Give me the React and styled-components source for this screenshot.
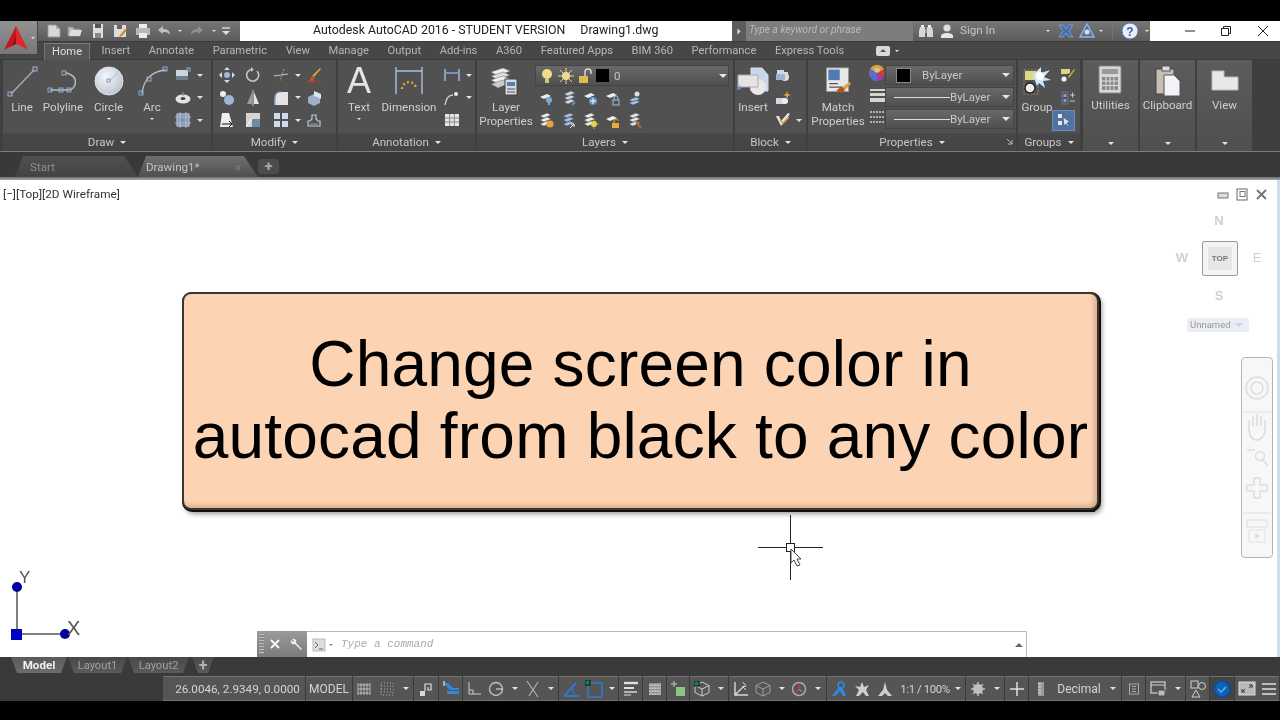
import React from 'react';
import styled, { createGlobalStyle } from 'styled-components';

const Global = createGlobalStyle`
  html, body { margin: 0; padding: 0; background: #000; }
  body { font-family: Roboto, "Noto Sans", sans-serif; overflow: hidden; }
  * { box-sizing: border-box; }
`;

const Page = styled.div`
  width: 1280px; height: 720px; display: flex; flex-direction: column; background: #000; position: relative; overflow: hidden; filter: blur(0.3px);
`;
const TopBlack = styled.div`height: 21px; background: #000;`;
const BottomBlack = styled.div`height: 19px; background: #000;`;

/* Title row */
const TitleRow = styled.div`
  height: 20px; display: flex; padding-left: 38px; background: linear-gradient(#767676, #5c5c5c); align-items: stretch;
`;
const Qat = styled.div`width: 202px; display: flex; align-items: center; padding-left: 7px;`;
const QatSlot = styled.span`
  width: ${p => p.$w}px; display: flex; align-items: center; justify-content: center; flex: none;
`;
const TitleBox = styled.div`
  width: 492px; background: #fff; color: #222; font-size: 12.35px; line-height: 18px; padding-left: 73px; white-space: nowrap; display: flex; gap: 15px;
`;
const SearchExpand = styled.div`
  width: 14px; background: #5c5c5c; display: flex; align-items: center; justify-content: center;
`;
const SearchBox = styled.div`
  width: 167px; background: #7d7d7d; color: #b9b9b9; font-style: italic; font-size: 10.2px; line-height: 18px; padding-left: 3px; white-space: nowrap; overflow: hidden;
`;
const InfoCenter = styled.div`
  width: 237px; display: flex; align-items: center; padding-left: 3px;
`;
const SignIn = styled.span`
  width: 82px; padding: 0 0 2px 1px; font-size: 11.6px; color: #c4c4c4; flex: none;
`;
const InfoSep = styled.span`width: 1px; height: 16px; background: #777; margin: 0 8px 0 7px; flex: none;`;
const WinButtons = styled.div`
  width: 130px; background: #fff; display: flex; align-items: center; padding-left: 24px;
`;
const WinSlot = styled.span`
  width: ${p => p.$w}px; display: flex; justify-content: center; flex: none;
`;
const AppButton = styled.div`
  position: absolute; left: 0; top: 21px; width: 38px; height: 34px; background: linear-gradient(#929292, #777); border-right: 1px solid #444; border-bottom: 1px solid #444; display: flex; align-items: center; padding-left: 4px; gap: 3px;
`;

/* Ribbon tabs */
const TabsRow = styled.div`
  height: 19px; background: #474747; display: flex; padding-left: 44px; border-top: 1px solid #3a3a3a; align-items: stretch; border-bottom: 1px solid #3a3a3a;
`;
const RibbonTab = styled.div`
  font-size: 11.2px; line-height: 17px; color: ${p => p.$active ? '#dcdcdc' : '#b6b6b6'}; padding: 0 9.3px; white-space: nowrap;
  ${p => p.$active && `background:#565656; border:1px solid #777; border-bottom:none; margin-right:2px; margin-top:1px; margin-bottom:-1px; line-height:15px; padding:0 7px;`}
`;
const TabExtra = styled.div`margin-left: 21px; display: flex; align-items: center; gap: 4px;`;

/* Ribbon */
const Ribbon = styled.div`
  height: 92px; background: #3f3f3f; display: flex; padding-left: 3px; gap: 2px; border-bottom: 1px solid #7c7c7c;
`;
const Panel = styled.div`
  width: ${p => p.$w}px; display: flex; flex-direction: column; flex: none; background: #515151;
`;
const PanelBody = styled.div`flex: 1; display: flex; min-height: 0;`;
const PanelTitle = styled.div`
  height: 18px; background: linear-gradient(#484848, #444); color: #c6c6c6; font-size: 11.6px; display: flex; align-items: center; justify-content: center; gap: 6px; position: relative; line-height: 17px;
`;
const Launcher = styled.span`position: absolute; right: 3px; top: 5px; display:flex;`;
const Large = styled.div`
  width: ${p => p.$w}px; flex: none; display: flex; flex-direction: column; align-items: center; padding-top: 5px; color: #cfcfcf; font-size: 11.6px; line-height: 14px; text-align: center;
`;
const LargeIcon = styled.div`height: 32px; display: flex; align-items: center; justify-content: center; margin-bottom: 3px;`;
const LargeCaret = styled.span`margin-top: 4px; display: flex;`;
const SmallGrid = styled.div`
  display: flex; flex-direction: column; padding-top: 4px;
`;
const SmallRow = styled.div`display: flex; height: 22.5px; align-items: center;`;
const Cell = styled.div`
  width: ${p => p.$w}px; padding-left: ${p => p.$pl ?? 0}px; display: flex; align-items: center; flex: none;
`;
const CaretGap = styled.span`margin-left: ${p => p.$g ?? 6}px; display: flex;`;
const Highlight = styled.div`
  margin-left: -4px; width: 23px; height: 21px; background: #4f74a3; border: 1px solid #6a8dbb; display: flex; align-items: center; justify-content: center;
`;
const RightStack = styled.div`display: flex; flex-direction: column; padding-top: 5px;`;
const LayerCombo = styled.div`
  width: 194px; height: 21px; background: linear-gradient(#696969, #4f4f4f); border: 1px solid #444; display: flex; align-items: center; padding: 0 1px 0 3px; gap: 3px; color: #c4c4c4; font-size: 11.5px; margin-bottom: 1px;
`;
const ComboLabel = styled.span`margin-left: 2px; flex: 1;`;
const LayerRow = styled.div`display: flex; height: 22.5px; align-items: center; padding-left: 4px; gap: 6px;`;
const PropIcons = styled.div`width: 17px; flex: none; display: flex; flex-direction: column; padding-top: 5px; gap: 6px; align-items: center;`;
const PropCombos = styled.div`width: 129px; display: flex; flex-direction: column; padding-top: 5px; gap: 2px;`;
const PropCombo = styled.div`
  height: 20px; background: linear-gradient(#696969, #4f4f4f); border: 1px solid #444; display: flex; align-items: center; color: #c8c8c8; font-size: 11.5px; padding: 0 3px 0 ${p => p.$pl}px;
`;
const ComboSwatch = styled.span`width: 15px; height: 15px; background: #000; border: 1px solid #888; margin-right: 11px; flex: none;`;
const ComboLine = styled.span`width: 56px; height: 1px; background: #ddd; flex: none;`;
const Grow = styled.span`flex: 1;`;
const Collapsed = styled.div`
  width: ${p => p.$w}px; flex: none; background: linear-gradient(#5c5c5c, #4f4f4f); display: flex; flex-direction: column; align-items: center; padding-top: 5px; color: #cfcfcf; font-size: 11.6px; margin-left: ${p => p.$ml || 0}px;
`;
const CollapsedLabel = styled.span`margin-top: 1px; line-height: 14px;`;
const CollapsedFoot = styled.span`margin-top: auto; margin-bottom: 6px; display: flex;`;

/* Doc tabs */
const DocRow = styled.div`
  height: 25px; background: #393939; display: flex; padding: 4px 0 0 15px; align-items: stretch;
`;
const DocTab = styled.div`
  width: ${p => p.$w}px; font-size: 11.6px; line-height: 21px; padding: 2px 0 0 ${p => p.$pl}px; color: ${p => p.$c}; background: ${p => p.$bg};
  clip-path: polygon(0 100%, 8px 0, calc(100% - 14px) 0, 100% 100%); display: flex; align-items: center; flex: none;
`;
const DocClose = styled.span`margin-left: auto; margin-right: 17px; color: #777; font-size: 12px; font-weight: 700; line-height: 1;`;
const DocPlus = styled.div`
  width: 21px; margin: 3px 0; background: #4c4c4c; color: #aaa; display: flex; align-items: center; justify-content: center; font-size: 15px; line-height: 1; border-radius: 3px; font-weight: 700;
`;
const Rule = styled.div`height: 3px; background: linear-gradient(#6f6f6f, #a9a9a9);`;

/* Canvas */
const Canvas = styled.div`height: 477px; background: #fff; position: relative; overflow: hidden;`;
const Abs = styled.div`position: absolute; left: ${p => p.$x}px; top: ${p => p.$y}px;`;
const ViewLabel = styled(Abs)`font-size: 11.8px; line-height: 14px; color: #333; white-space: nowrap;`;
const Edge = styled.div`position: absolute; right: 0; top: 0; bottom: 0; width: 3px; background: #cddcf0;`;
const Card = styled.div`
  position: absolute; left: 182px; top: 112px; width: 917px; height: 218px; background: #fcd3b3; border: 2px solid #3d3529; border-radius: 9px;
  box-shadow: 1px 1px 0 1px #111, 3px 4px 5px rgba(0,0,0,.4), inset -3px -3px 4px rgba(150,110,80,.35);
  display: flex; flex-direction: column; align-items: center; justify-content: center; padding-bottom: 3px;
  &::after { content: ""; position: absolute; left: 276px; right: 2px; bottom: -4px; height: 2px; background: #111; }
`;
const CardLine = styled.div`
  font-family: "Liberation Sans", Arial, sans-serif; font-size: 64px; line-height: 72px; color: #000; white-space: nowrap; letter-spacing: 0.2px;
`;
const CubeLetter = styled(Abs)`
  width: 20px; margin-left: -10px; text-align: center; font-family: "Liberation Sans", sans-serif; font-size: 13px; line-height: 14px; font-weight: ${p => p.$b ? 700 : 400}; color: #d0d0d0;
`;
const CubeFace = styled(Abs)`
  width: 36px; height: 35px; border: 1px solid #9c9c9c; border-radius: 2px; background: #f4f4f4; display: flex; align-items: center; justify-content: center; padding: 5px;
`;
const CubeInner = styled.div`
  width: 100%; height: 100%; background: #e6e6e6; color: #777; font-size: 8px; font-weight: 700; display: flex; align-items: center; justify-content: center; font-family: "Liberation Sans", sans-serif;
`;
const WcsPill = styled(Abs)`
  width: 62px; height: 14px; background: #eaedf4; border-radius: 2px; color: #999; font-size: 9.5px; line-height: 14px; padding-left: 3px; display: flex; align-items: center; gap: 4px;
`;
const NavBar = styled(Abs)`
  width: 32px; height: 201px; border: 1px solid #b5b5b5; border-radius: 4px; background: #f7f7f7;
`;
const CmdLine = styled(Abs)`
  width: 770px; height: 26px; display: flex; background: #fff; border: 1px solid #b8b8b8; border-left: none; border-bottom: none;
`;
const CmdHandle = styled.div`
  width: 50px; flex: none; background: linear-gradient(#9a9a9a, #7c7c7c); display: flex; align-items: center; padding-left: 2px; margin-top: -1px; gap: 8px;
`;
const Grip = styled.span`width: 5px; height: 20px; background: repeating-linear-gradient(#bdbdbd 0 1px, #8a8a8a 1px 3px); margin-right: -3px; flex: none;`;
const CmdPrompt = styled.div`display: flex; align-items: center; padding-left: 5px; flex: none; gap: 3px;`;
const CmdText = styled.div`
  margin-left: 8px; font-family: "Liberation Mono", monospace; font-style: italic; font-size: 11px; color: #aaa; flex: 1; line-height: 24px; white-space: nowrap;
`;
const CmdArrow = styled.span`margin-right: 3px; align-self: center; display: flex;`;

/* Layout tabs */
const LayoutRow = styled.div`height: 19px; background: #3a3a3a; display: flex; padding: 0 0 3px 11px; align-items: stretch;`;
const LayoutTab = styled.div`
  width: ${p => p.$w}px; margin-right: ${p => p.$mr || 0}px; flex: none; background: ${p => p.$active ? 'linear-gradient(#5a5a5a,#6c6c6c)' : 'linear-gradient(#484848,#5a5a5a)'};
  color: ${p => p.$active ? '#f0f0f0' : '#a0a0a0'}; font-weight: ${p => p.$active ? 700 : 400}; font-size: ${p => p.$active ? 11.6 : 11.2}px; display: flex; align-items: center; justify-content: center;
  clip-path: polygon(0 0, 100% 0, calc(100% - 6px) 100%, 6px 100%);
`;
const LayoutPlus = styled(LayoutTab)`font-size: 16px; font-weight: 700; color: #b0b0b0;`;

/* Status */
const StatusRow = styled.div`height: 25px; background: #3a3a3a; display: flex; padding-left: 163px; gap: 1px;`;
const StatusGroup = styled.div`
  display: flex; align-items: center; flex: none; background: ${p => p.$dark ? '#444' : '#555'}; border-top: 1px solid #737373; border-bottom: 1px solid #737373; height: 25px;
`;
const StatusCell = styled.div`
  width: ${p => p.$w}px; flex: none; height: 100%; display: flex; align-items: center; justify-content: center; color: #d4d4d4; white-space: nowrap;
  font-size: ${p => p.$fs || 12}px; letter-spacing: ${p => p.$ls || 0}px; padding-left: ${p => p.$pl || 0}px;
`;

const Caret = styled.span`
  width: 0; height: 0; flex: none; display: inline-block;
  border-left: ${p => p.$s ?? 3}px solid transparent; border-right: ${p => p.$s ?? 3}px solid transparent;
  border-top: ${p => p.$s ?? 3}px solid ${p => p.$c || '#e4e4e4'};
`;
const CaretUp = styled(Caret)`border-top: none; border-bottom: 4px solid #666; border-left-width: 4px; border-right-width: 4px;`;
const CaretRight = styled(Caret)`transform: rotate(-90deg);`;

const SvgBase = styled.svg`display: block; flex: none;`;
const I = ({ s = 16, h, vb, children }) => (
  <SvgBase width={s} height={h || s} viewBox={vb || `0 0 ${s} ${h || s}`} fill="none">{children}</SvgBase>
);

/* ========== Icons ========== */
const ic = {
  qNew: <I><path d="M2 2h8l4 4v8H2z" fill="#d8d8d8" stroke="#999" /><path d="M10 2v4h4" fill="#aaa" /></I>,
  qOpen: <I><path d="M1 4h5l1 2h6v7H1z" fill="#bbb" stroke="#888" /><path d="M4 7h11l-2 6H2z" fill="#ddd" /></I>,
  qSave: <I><path d="M3 1h10v14H3z" fill="#ddd" /><path d="M5 1h6v4H5z" fill="#555" /><path d="M5 10h6v5H5z" fill="#888" /></I>,
  qSaveAs: <I><path d="M2 2h12v12H2z" fill="#ddd" /><path d="M5 2h5v4H5z" fill="#666" /><path d="M8 12l5-6 2 1-5 6-3 1z" fill="#c98a2a" /></I>,
  qPrint: <I><path d="M4 1h8v4H4z" fill="#eee" /><path d="M1 5h14v7H1z" fill="#b9b9b9" /><path d="M4 10h8v5H4z" fill="#eee" /></I>,
  undo: <I><path d="M2 7l5-4v3c4 0 7 1 7 6-2-3-4-3-7-3v2z" fill="#bfbfbf" /></I>,
  redo: <I><path d="M14 7L9 3v3C5 6 2 7 2 12c2-3 4-3 7-3v2z" fill="#8f8f8f" /></I>,
  more: <I s={10}><path d="M1 2h8" stroke="#ddd" strokeWidth="1.4" /><path d="M1 5h8L5 9z" fill="#ddd" /></I>,
  logo: <I s={24}><path d="M12 0L0 24l8-4 4-2V10z" fill="#c5161d" /><path d="M12 0l12 24-9-5-3-1V10z" fill="#e3262a" /><path d="M8 20l4-10v8z" fill="#8e0f14" /></I>,
  binoc: <I><path d="M2 4h5v10H1V8zM9 4h5l1 4v6H9z" fill="#d8d8d8" /><path d="M7 6h2v4H7z" fill="#999" /><path d="M3 2h3v2H3zM10 2h3v2h-3z" fill="#eee" /></I>,
  person: <I><circle cx="8" cy="5" r="3.6" fill="#ddd" /><path d="M2 15v-2c0-2 3-3 6-3s6 1 6 3v2z" fill="#e6e6e6" /></I>,
  xchange: <I><path d="M1 2h4l3 4 3-4h4l-4 6 4 6h-4l-3-4-3 4H1l4-6z" fill="#3f6fb7" stroke="#9dbbe6" strokeWidth=".6" /></I>,
  a360: <I><path d="M8 1l7 13H1z" stroke="#8fb0e0" strokeWidth="1.5" fill="#56708f" /><circle cx="8" cy="9" r="2.5" fill="#cfe0f5" /></I>,
  help: <I s={18}><circle cx="9" cy="9" r="8" fill="#e8eefa" stroke="#5a7cb8" /><text x="9" y="13.5" textAnchor="middle" fontSize="12" fontWeight="700" fontFamily="Liberation Sans" fill="#3a62a8">?</text></I>,
  ribSmall: <I s={16}><rect x="1" y="3" width="14" height="10" rx="2" fill="#d8d8d8" /><path d="M8 6l3 3H5z" fill="#555" /></I>,
  line: <I s={32}><path d="M5 29L28 5" stroke="#a9a9a9" strokeWidth="1.5" /><rect x="2" y="27" width="4" height="4" stroke="#9db7d9" /><rect x="27" y="2" width="4" height="4" stroke="#9db7d9" /></I>,
  poly: <I s={32}><path d="M3 25h19a8 8 0 0 0 2-15 9 9 0 0 0-6-2" stroke="#bdbdbd" strokeWidth="1.4" /><rect x="1" y="23" width="4" height="4" stroke="#8eaed6" /><rect x="12" y="23" width="4" height="4" stroke="#8eaed6" /><rect x="20" y="23" width="4" height="4" stroke="#8eaed6" /><rect x="15" y="6" width="4" height="4" stroke="#8eaed6" /></I>,
  circle: <I s={32}><defs><radialGradient id="gc" cx=".4" cy=".35" r=".8"><stop offset="0" stopColor="#f5f7fa" /><stop offset="1" stopColor="#b3bcc8" /></radialGradient></defs><circle cx="16" cy="16" r="14" fill="url(#gc)" stroke="#dde" /><path d="M16 16L25 8" stroke="#9db7d9" /><rect x="14" y="14" width="3" height="3" stroke="#7fa0cc" /></I>,
  arc: <I s={32}><path d="M6 29C7 15 16 6 30 5" stroke="#c0c0c0" strokeWidth="1.4" /><rect x="3" y="26" width="4" height="4" stroke="#8eaed6" /><rect x="11" y="12" width="4" height="4" stroke="#8eaed6" /><rect x="27" y="2" width="4" height="4" stroke="#8eaed6" /></I>,
  rect: <I><path d="M1 3h12v10H1z" fill="#cfd5dd" /><path d="M1 9h12v4H1z" fill="#6f7d8f" /><rect x="12" y="1" width="3" height="3" stroke="#8eaed6" /></I>,
  hatchEl: <I><ellipse cx="8" cy="9" rx="7.5" ry="4.5" fill="#e4e4e4" /><ellipse cx="8" cy="8.5" rx="2.5" ry="1.5" fill="#444" /><path d="M8 2v4" stroke="#999" /></I>,
  hatch: <I><rect x="2" y="2" width="12" height="12" fill="#7f95b5" stroke="#ccd" /><path d="M0 5h16M0 11h16M5 0v16M11 0v16" stroke="#b9c7dc" strokeWidth=".8" /></I>,
  move: <I><path d="M8 0l3 3H5zM8 16l-3-3h6zM0 8l3-3v6zM16 8l-3 3V5z" fill="#cfdcee" /><circle cx="8" cy="8" r="3" fill="#9db7d9" /></I>,
  rotate: <I><path d="M12 4a6 6 0 1 1-5-1.8" stroke="#c4c4c4" strokeWidth="1.6" /><path d="M6 0l3 2.4L6 5z" fill="#c4c4c4" /></I>,
  trim: <I><path d="M1 9L15 7" stroke="#c4c4c4" /><path d="M11 2L7 14" stroke="#9a9a9a" strokeDasharray="2 1" /></I>,
  erase: <I><path d="M14 1l1 1-7 8-2-1z" fill="#d9a441" /><path d="M6 9l3 2-2 3H3z" fill="#b85a2a" /><path d="M1 15h14" stroke="#c33" /></I>,
  copy: <I><circle cx="4" cy="4" r="3" fill="#eee" /><circle cx="10" cy="10" r="5" fill="#9db7d9" /></I>,
  mirror: <I><path d="M7 2v12H2z" fill="#9a9a9a" /><path d="M9 2v12h5z" fill="#dce4ef" /><path d="M8 0v16" stroke="#ccc" /></I>,
  fillet: <I><path d="M2 15V8c0-4 3-6 6-6h7v13z" fill="#e4e4e4" /><path d="M2 15V8c0-4 3-6 6-6" stroke="#8eaed6" strokeWidth="1.5" /></I>,
  block3: <I><path d="M2 7l6-3 6 3v6l-6 3-6-3z" fill="#9fb0c6" /><path d="M8 1l7 3v5l-4-2-3-1z" fill="#dbe3ee" /></I>,
  stretch: <I><path d="M3 1h7l4 14H1z" fill="#eee" /><path d="M3 12h9M10 9l3 3-3 3" stroke="#111" /></I>,
  scale: <I><path d="M1 1h14v14H1z" fill="#d4d4d4" /><path d="M7 7h8v8H7z" fill="#7188a5" /><path d="M1 15l6-8" stroke="#fff" /></I>,
  array: <I><path d="M1 1h6v6H1zM9 1h6v6H9zM1 9h6v6H1zM9 9h6v6H9z" fill="#cddcee" /></I>,
  offset: <I><path d="M2 14V9h2l2-2V3h4v4l2 2h2v5z" stroke="#bcd" strokeWidth="1.2" /><path d="M4 12h8" stroke="#8a9" /></I>,
  dim: <I s={32}><path d="M3 2v27M29 2v27M3 6h26" stroke="#a9c0dc" strokeWidth="1.4" /><path d="M9 24a7 7 0 0 1 14 0" stroke="#e8a33d" strokeWidth="2.4" strokeDasharray="2 2.4" /></I>,
  dimS: <I><path d="M1 2v12M15 2v12" stroke="#a9c0dc" strokeWidth="1.4" /><path d="M1 6h14" stroke="#6d93c4" strokeWidth="2" /></I>,
  leader: <I><path d="M1 15c1-6 3-10 8-10" stroke="#cfcfcf" strokeWidth="1.4" /><circle cx="12" cy="4" r="2" fill="#eee" /></I>,
  table: <I><path d="M1 2h14v12H1z" fill="#e6e6e6" /><path d="M1 6h14M1 10h14M5.6 2v12M10.3 2v12" stroke="#8a8a8a" /></I>,
  layerLg: <I s={32}><path d="M1 7l12-4 7 3-12 5z" fill="#eee" stroke="#777" strokeWidth=".5" /><path d="M1 11l12-4 7 3-12 5z" fill="#ddd" stroke="#666" strokeWidth=".5" /><path d="M1 15l12-4 7 3-12 5z" fill="#f2f2f2" stroke="#666" strokeWidth=".5" /><path d="M1 19l12-4 7 3-12 5z" fill="#ccc" stroke="#666" strokeWidth=".5" /><rect x="15" y="14" width="12" height="16" fill="#d6dbe2" stroke="#444" /><path d="M17 17h8v4h-8z" fill="#5680b5" /><path d="M17 24h8M17 27h8" stroke="#555" /></I>,
  bulb: <I><circle cx="8" cy="6" r="5" fill="#f3dc87" /><path d="M6 11h4v4H6z" fill="#d7c26f" /></I>,
  sun: <I><circle cx="8" cy="8" r="4" fill="#f1e09a" /><path d="M8 0v16M0 8h16M2 2l12 12M14 2L2 14" stroke="#e8d98f" /></I>,
  lock: <I><path d="M2 8h9v7H2z" fill="#e4b94d" /><path d="M8 8V4a3 3 0 0 1 6 0v2" stroke="#ddd" strokeWidth="1.4" /></I>,
  swatch: <I s={13}><rect width="13" height="13" fill="#000" /></I>,
  lyr1: <I><path d="M1 7l7-3 4 2-7 3z" fill="#eee" /><circle cx="10" cy="10" r="3" fill="#7da9d9" /><path d="M9 12h2v3H9z" fill="#7da9d9" /></I>,
  lyr2: <I><path d="M3 4l7-3 4 2-7 3zM3 8l7-3 4 2-7 3zM3 12l7-3 4 2-7 3z" fill="#ccd5e2" stroke="#444" strokeWidth=".4" /><path d="M11 15l3-3" stroke="#6aa2dc" strokeWidth="1.4" /></I>,
  lyr3: <I><path d="M1 6l7-3 4 2-7 3z" fill="#eee" /><circle cx="10" cy="11" r="4" fill="#5a8fc8" /><path d="M10 8v6M7 11h6" stroke="#fff" /></I>,
  lyr4: <I><path d="M1 6l7-3 4 2-7 3z" fill="#eee" /><rect x="8" y="10" width="6" height="5" stroke="#9ec0e2" /><path d="M9 10V8a2 2 0 0 1 4 0v2" stroke="#9ec0e2" /></I>,
  lyr5: <I><path d="M2 10l7-3 4 2-7 3zM2 13l7-3 4 2-7 3z" fill="#a8c4e6" stroke="#345" strokeWidth=".4" /><circle cx="10" cy="4" r="2.5" fill="#d4e2f3" /></I>,
  lyr6: <I><path d="M1 3l7-3 4 2-7 3zM1 7l7-3 4 2-7 3zM1 11l7-3 4 2-7 3z" fill="#eee" stroke="#444" strokeWidth=".4" /><circle cx="11" cy="11" r="3.6" fill="#e8a33d" /></I>,
  lyr7: <I><path d="M2 3l7-3 4 2-7 3zM2 7l7-3 4 2-7 3zM2 11l7-3 4 2-7 3z" fill="#a4bcdd" stroke="#345" strokeWidth=".4" /><path d="M9 15l4-4m-3 0h3v3" stroke="#eee" /></I>,
  lyr8: <I><path d="M1 3l7-3 4 2-7 3zM1 7l7-3 4 2-7 3zM1 11l7-3 4 2-7 3z" fill="#eee" stroke="#444" strokeWidth=".4" /><circle cx="11" cy="11" r="3" fill="#e8d24d" /><path d="M11 6v10M6 11h10" stroke="#e8d24d" strokeWidth=".7" /></I>,
  lyr9: <I><path d="M1 6l7-3 4 2-7 3z" fill="#eee" /><rect x="7" y="10" width="7" height="5" fill="#e2ae3e" /><path d="M9 10V8a2 2 0 0 1 4 0" stroke="#e2ae3e" /></I>,
  lyr10: <I><path d="M2 3l7-3 4 2-7 3zM2 7l7-3 4 2-7 3zM2 11l7-3 4 2-7 3z" fill="#e4e4e4" stroke="#444" strokeWidth=".4" /><path d="M9 9l5 6" stroke="#b5692a" strokeWidth="2" /></I>,
  insert: <I s={32}><path d="M14 3h11l6 7v16H14z" fill="#c7d6ea" stroke="#dde" /><circle cx="21" cy="22" r="8" fill="#e8e8e8" /><path d="M1 10h20v12H1z" fill="#e4e4e4" stroke="#aaa" /><rect x="0" y="21" width="3" height="3" stroke="#7da9d9" /></I>,
  bk1: <I><path d="M2 7V3h7v2h4v2z" fill="#cdd8e6" /><circle cx="10" cy="10" r="4" fill="#ddd" /><path d="M1 7h9v6H1z" fill="#9db3cf" /></I>,
  bk2: <I><path d="M1 8h9v6H1z" fill="#cfd8e4" /><circle cx="10" cy="11" r="3" fill="#eee" /><path d="M12 1l1 3 3 1-3 1-1 3-1-3-3-1 3-1z" fill="#e8a33d" /></I>,
  bk3: <I><path d="M1 4l3 0 2 5 7-8 2 1-9 12z" fill="#e6e6e6" /><path d="M5 8l3 3 6-6" stroke="#d9a441" strokeWidth="1.6" /></I>,
  match: <I s={28} vb="0 0 32 32"><rect x="3" y="1" width="25" height="27" fill="#e8e8e8" stroke="#999" /><path d="M5 3h13v12H5z" fill="#4f7cb2" /><path d="M6 19h10M6 23h14" stroke="#555" strokeWidth="1.5" /><path d="M18 25l11-8 2 2-9 9z" fill="#d9a441" /><path d="M14 27l6-5 4 4-4 4z" fill="#b0561f" /></I>,
  wheel: <I><circle cx="8" cy="8" r="7.5" fill="#d33b3b" /><path d="M8 8L1 4a8 8 0 0 1 14 0z" fill="#d8a23a" /><path d="M8 8V16a8 8 0 0 1-7-12z" fill="#5b6bd0" /><path d="M8 8V16a8 8 0 0 0 7-4z" fill="#a23aa8" /><circle cx="8" cy="5" r="2.6" fill="#d0d8b0" opacity=".7" /></I>,
  weight: <I><path d="M1 2h15v2H1z" fill="#d4d4d4" /><path d="M1 6h15v3H1z" fill="#d4d4d4" /><path d="M1 11h15v4H1z" fill="#d4d4d4" /></I>,
  ltype: <I><path d="M1 3h15M1 8h15M1 13h15" stroke="#cfcfcf" strokeDasharray="2 1" strokeWidth="1.4" /></I>,
  group: <I s={32}><rect x="3" y="5" width="14" height="24" stroke="#888" strokeDasharray="2 1.4" /><path d="M4 6h11v9H4z" fill="#dcd987" /><circle cx="9" cy="23" r="5" fill="#eee" stroke="#222" strokeWidth="1.4" /><path d="M12 10l8-8 0 6 9-3-6 7 7 3-8 1 2 7-6-5-2 3z" fill="#cfe6fa" /><circle cx="19" cy="11" r="4" fill="#fff" /></I>,
  g1: <I><path d="M1 2h9v4l-3 1H1z" fill="#dfd48a" /><circle cx="4" cy="12" r="2.6" fill="#eee" /><path d="M8 10l6-8 1 1-6 8z" fill="#d9a441" /></I>,
  g2: <I><rect x="2" y="2" width="6" height="12" stroke="#88a" strokeDasharray="1.5 1" /><rect x="3.5" y="4" width="3" height="3" fill="#7aa0d0" /><rect x="3.5" y="9" width="3" height="3" fill="#7aa0d0" /><path d="M10 5h5M12.5 2.5v5M10 11h5" stroke="#c5c5c5" /></I>,
  g3: <I><rect x="2" y="2" width="4" height="4" fill="#e4e8f0" /><rect x="2" y="9" width="4" height="4" fill="#e4e8f0" /><path d="M7 5l7 5-3 1 2 3-1 1-2-3-2 2z" fill="#d8e4f4" stroke="#234" strokeWidth=".5" /></I>,
  calc: <I s={32}><rect x="4" y="1" width="22" height="27" rx="1" fill="#d7d7d7" stroke="#888" /><rect x="7" y="4" width="16" height="5" fill="#999" /><path d="M7 12h16v13H7z" fill="#8a8a8a" /><path d="M11 12v13M15 12v13M19 12v13M7 16h16M7 20.5h16" stroke="#ddd" /></I>,
  clip: <I s={32}><rect x="4" y="4" width="18" height="25" fill="#c7bfb0" stroke="#444" /><rect x="10" y="1" width="8" height="5" fill="#ddd" stroke="#555" /><path d="M12 10h10l6 6v15H12z" fill="#f2f3f7" stroke="#555" /></I>,
  folder: <I s={32}><path d="M3 6h12v6h14v13H3z" fill="#e8e8e8" stroke="#bbb" /></I>,
  stGrid: <I><path d="M2 2v12M5 2v12M8 2v12M11 2v12M14 2v12M2 4h12M2 8h12M2 12h12" stroke="#d0d0d0" strokeWidth=".8" /></I>,
  stSnap: <I><path d="M2 2h12v12H2z" stroke="#aaa" strokeDasharray="1 2" /><path d="M2 5h12M2 8h12M2 11h12" stroke="#aaa" strokeDasharray="1 2" /></I>,
  stInfer: <I><path d="M2 10h5v5H2z" fill="#d8d8d8" /><path d="M7 10V3h6v6h-3V6" stroke="#ddd" strokeWidth="1.2" /></I>,
  stDyn: <I><path d="M0 2h5l5 5h6v2H7z" fill="#2f88d8" /><path d="M4 10h12v3H4z" fill="#2f88d8" /><path d="M1 0v5" stroke="#fff" /></I>,
  stOrtho: <I><path d="M3 1v12h12" stroke="#cfcfcf" /><path d="M3 9h4v4" stroke="#cfcfcf" /></I>,
  stPolar: <I><circle cx="8" cy="8" r="6.5" stroke="#bfbfbf" strokeWidth="1.4" /><path d="M8 8h7" stroke="#bfbfbf" strokeWidth="1.4" /></I>,
  stIso: <I s={18}><path d="M3 1l11 16M14 2L5 16" stroke="#b0b0b0" strokeWidth="1.2" /></I>,
  stAngle: <I><path d="M1 15h15M1 15L13 2" stroke="#2f78cc" strokeWidth="2" /><path d="M9 7l3 8" stroke="#2f78cc" strokeWidth="1.4" /></I>,
  stSnapBox: <I s={18}><rect x="3" y="3" width="14" height="14" stroke="#2f78cc" strokeWidth="1.6" /><rect x="0" y="0" width="5" height="5" fill="#0f8a4f" stroke="#111" /></I>,
  stLines: <I><path d="M1 2h14" stroke="#e0e0e0" strokeWidth="2.4" /><path d="M1 7h10" stroke="#e0e0e0" strokeWidth="2" /><path d="M1 11h13" stroke="#e0e0e0" strokeWidth="1.4" /><path d="M1 14h7" stroke="#e0e0e0" /></I>,
  stChecker: <I><rect x="2" y="2" width="12" height="12" fill="#aaa" /><path d="M2 4h12M2 7h12M2 10h12M2 13h12" stroke="#e8e8e8" strokeDasharray="1.5 1.5" /><path d="M3 2v12M6 2v12M9 2v12M12 2v12" stroke="#666" strokeDasharray="1.5 1.5" /></I>,
  stGreen: <I><rect x="6" y="6" width="9" height="9" fill="#8cc57d" /><path d="M1 3h6M4 0v6" stroke="#ccc" /></I>,
  stCube: <I><path d="M8 1l7 3.5v7L8 15l-7-3.5v-7zM1 4.5L8 8l7-3.5M8 8v7" stroke="#cfcfcf" /><rect x="0" y="0" width="5" height="5" fill="#0f8a4f" stroke="#111" /></I>,
  stAxes: <I><path d="M2 1v13h13M2 14L11 5" stroke="#d8d8d8" strokeWidth="1.4" /><path d="M10 1l3 4-3 1 3 3" stroke="#d8d8d8" /></I>,
  stCube2: <I><path d="M8 1l7 3.5v7L8 15l-7-3.5v-7zM1 4.5L8 8l7-3.5M8 8v7" stroke="#a0a0a0" /></I>,
  stGizmo: <I><circle cx="8" cy="8" r="6.5" stroke="#aaa" strokeWidth="1.5" /><path d="M8 4v4l-3 3" stroke="#d34" strokeWidth="1.3" /><path d="M8 8l3 3" stroke="#4a8" strokeWidth="1.3" /></I>,
  stAnnoBlue: <I><circle cx="10" cy="4" r="3" stroke="#2f88e8" strokeWidth="1.6" /><path d="M8 6L1 15h3l5-5 3 5h3l-4-9" fill="#2f88e8" /></I>,
  stAnnoA: <I><path d="M8 1l2 5 5-2-3 5 3 6h-3l-3-4-4 4H2l3-6-4-4 5 1z" fill="#cfcfcf" /></I>,
  stAnnoB: <I><path d="M8 1l2 8 5 6h-4l-3-3-3 3H1l5-6z" fill="#cfcfcf" /></I>,
  stGear: <I s={14}><circle cx="7" cy="7" r="5" fill="#bfbfbf" /><circle cx="7" cy="7" r="1.8" fill="#555" /><path d="M7 0v14M0 7h14M2.2 2.2l9.6 9.6M11.8 2.2l-9.6 9.6" stroke="#bfbfbf" strokeWidth="1.5" /></I>,
  stPlus: <I><path d="M8 1v14M1 8h14" stroke="#e0e0e0" strokeWidth="1.5" /></I>,
  stRuler: <I><path d="M5 1h6v14H5z" fill="#9a9a9a" /><path d="M5 3h3M5 6h3M5 9h3M5 12h3" stroke="#ddd" /></I>,
  stCalc: <I s={12}><rect x="1.5" y="1" width="9" height="10" stroke="#aaa" /><path d="M4 3.5h4M4 6h4M4 8.5h4" stroke="#aaa" /></I>,
  stWin: <I s={18}><rect x="1" y="2" width="14" height="11" stroke="#d0d0d0" strokeWidth="1.2" /><path d="M1 5h14" stroke="#d0d0d0" /><rect x="8" y="10" width="7" height="6" fill="#bcbcbc" stroke="#444" /></I>,
  stShapes: <I s={18}><rect x="2" y="1" width="7" height="7" stroke="#cfcfcf" /><circle cx="13" cy="6" r="3.5" stroke="#cfcfcf" /><path d="M7 10l4 7H3z" stroke="#cfcfcf" /></I>,
  stBlue: <I s={22}><circle cx="11" cy="11" r="8" fill="#0f62b8" stroke="#0d4f96" strokeWidth="2" /><path d="M7 11l3 3 5-5" stroke="#6fb0ee" strokeWidth="1.3" /></I>,
  stMonitor: <I s={18}><rect x="1" y="2" width="16" height="13" fill="#b9b9b9" stroke="#ddd" /><path d="M4 12l3-3M4 12h3M4 12v-3M14 5l-3 3M14 5h-3M14 5v3" stroke="#333" /></I>,
  stMenu: <I s={18}><path d="M2 4h14M2 9h14M2 14h14" stroke="#e0e0e0" strokeWidth="1.5" /></I>,
};

const Small = ({ n, c, w, pl, g }) => (
  <Cell $w={w} $pl={pl}>{ic[n]}{c && <CaretGap $g={g}><Caret /></CaretGap>}</Cell>
);

const BigA = styled.div`
  font-family: "Liberation Sans", sans-serif; font-size: 36px; line-height: 32px; color: #e4e4e4; height: 32px; margin-bottom: 3px;
`;

const Tool = ({ w, n, label, caret }) => (
  <Large $w={w}>
    {n === 'A' ? <BigA>A</BigA> : <LargeIcon>{ic[n]}</LargeIcon>}
    {label}
    {caret && <LargeCaret><Caret $s={2.5} /></LargeCaret>}
  </Large>
);

const ribbonTabs = ['Insert', 'Annotate', 'Parametric', 'View', 'Manage', 'Output', 'Add-ins', 'A360', 'Featured Apps', 'BIM 360', 'Performance', 'Express Tools'];

/* cell: { w, icon, caret, text, fs, ls, pl }  group: { dark, cells } */
const px = (w, icon) => ({ w, icon });
const cr = w => ({ w, caret: true });
const statusGroups = [
  { cells: [{ w: 142, text: '26.0046, 2.9349, 0.0000', fs: 11.7, pl: 7 }] },
  { cells: [{ w: 46, text: 'MODEL' }] },
  { cells: [px(22, 'stGrid'), px(24, 'stSnap'), cr(14)] },
  { cells: [px(24, 'stInfer')] },
  { cells: [px(23, 'stDyn')] },
  { cells: [px(22, 'stOrtho'), px(22, 'stPolar'), cr(15), px(22, 'stIso'), cr(14)] },
  { cells: [px(23, 'stAngle'), px(23, 'stSnapBox'), cr(13)] },
  { cells: [px(23, 'stLines')] },
  { cells: [px(23, 'stChecker')] },
  { cells: [px(22, 'stGreen')] },
  { cells: [px(23, 'stCube'), cr(15)] },
  { cells: [px(23, 'stAxes'), px(22, 'stCube2'), cr(15), px(20, 'stGizmo'), cr(17)] },
  { cells: [px(23, 'stAnnoBlue'), px(23, 'stAnnoA'), px(23, 'stAnnoB'), { w: 55, text: '1:1 / 100%', fs: 11.4, ls: -0.4, pl: 3 }, cr(14)] },
  { cells: [px(24, 'stGear'), cr(14)] },
  { cells: [px(23, 'stPlus')] },
  { cells: [px(24, 'stRuler'), { w: 52, text: 'Decimal' }, cr(16)] },
  { cells: [px(23, 'stCalc')] },
  { cells: [px(25, 'stWin'), cr(14)] },
  { cells: [px(23, 'stShapes')] },
  { dark: true, cells: [px(24, 'stBlue')] },
  { cells: [px(24, 'stMonitor'), px(20, 'stMenu')] },
];

export default function App() {
  return (
    <Page>
      <Global />
      <TopBlack />
      <TitleRow>
        <Qat>
          <QatSlot $w={18}>{ic.qNew}</QatSlot>
          <QatSlot $w={23}>{ic.qOpen}</QatSlot>
          <QatSlot $w={23}>{ic.qSave}</QatSlot>
          <QatSlot $w={22}>{ic.qSaveAs}</QatSlot>
          <QatSlot $w={23}>{ic.qPrint}</QatSlot>
          <QatSlot $w={20}>{ic.undo}</QatSlot>
          <QatSlot $w={12}><Caret $s={2} /></QatSlot>
          <QatSlot $w={22}>{ic.redo}</QatSlot>
          <QatSlot $w={12}><Caret $s={2} /></QatSlot>
          <QatSlot $w={11}>{ic.more}</QatSlot>
        </Qat>
        <TitleBox><span>Autodesk AutoCAD 2016 - STUDENT VERSION</span><span>Drawing1.dwg</span></TitleBox>
        <SearchExpand><CaretRight /></SearchExpand>
        <SearchBox>Type a keyword or phrase</SearchBox>
        <InfoCenter>
          <QatSlot $w={19}>{ic.binoc}</QatSlot>
          <QatSlot $w={24}>{ic.person}</QatSlot>
          <SignIn>Sign In</SignIn>
          <QatSlot $w={14}><Caret $s={2} /></QatSlot>
          <QatSlot $w={22}>{ic.xchange}</QatSlot>
          <QatSlot $w={20}>{ic.a360}</QatSlot>
          <QatSlot $w={8}><Caret $s={2} /></QatSlot>
          <InfoSep />
          <QatSlot $w={18}>{ic.help}</QatSlot>
          <QatSlot $w={16}><Caret $s={2} /></QatSlot>
        </InfoCenter>
        <WinButtons>
          <WinSlot $w={32}><I s={12}><path d="M1 6h10" stroke="#222" /></I></WinSlot>
          <WinSlot $w={40}><I s={12}><path d="M1.5 3.5h7v7h-7zM3.5 3.5v-2h7v7h-2" stroke="#222" /></I></WinSlot>
          <WinSlot $w={34}><I s={12}><path d="M1 1l10 10M11 1L1 11" stroke="#222" /></I></WinSlot>
        </WinButtons>
      </TitleRow>
      <AppButton>{ic.logo}<Caret $s={2.5} /></AppButton>

      <TabsRow>
        <RibbonTab $active>Home</RibbonTab>
        {ribbonTabs.map(t => <RibbonTab key={t}>{t}</RibbonTab>)}
        <TabExtra>{ic.ribSmall}<Caret $s={2} /></TabExtra>
      </TabsRow>

      <Ribbon>
        <Panel $w={208}>
          <PanelBody>
            <Tool w={38} n="line" label="Line" />
            <Tool w={44} n="poly" label="Polyline" />
            <Tool w={47} n="circle" label="Circle" caret />
            <Tool w={40} n="arc" label="Arc" caret />
            <SmallGrid>
              <SmallRow><Small n="rect" c w={39} pl={3} /></SmallRow>
              <SmallRow><Small n="hatchEl" c w={39} pl={3} /></SmallRow>
              <SmallRow><Small n="hatch" c w={39} pl={3} /></SmallRow>
            </SmallGrid>
          </PanelBody>
          <PanelTitle>Draw <Caret /></PanelTitle>
        </Panel>
        <Panel $w={123}>
          <PanelBody>
            <SmallGrid>
              <SmallRow><Small n="move" w={27} pl={6} /><Small n="rotate" w={27} pl={5} /><Small n="trim" c w={39} pl={6} /><Small n="erase" w={30} /></SmallRow>
              <SmallRow><Small n="copy" w={27} pl={6} /><Small n="mirror" w={27} pl={5} /><Small n="fillet" c w={39} pl={6} /><Small n="block3" w={30} /></SmallRow>
              <SmallRow><Small n="stretch" w={27} pl={6} /><Small n="scale" w={27} pl={5} /><Small n="array" c w={39} pl={6} /><Small n="offset" w={30} /></SmallRow>
            </SmallGrid>
          </PanelBody>
          <PanelTitle>Modify <Caret /></PanelTitle>
        </Panel>
        <Panel $w={137}>
          <PanelBody>
            <Tool w={42} n="A" label="Text" caret />
            <Tool w={58} n="dim" label="Dimension" />
            <SmallGrid>
              <SmallRow><Small n="dimS" c w={37} pl={6} /></SmallRow>
              <SmallRow><Small n="leader" c w={37} pl={6} /></SmallRow>
              <SmallRow><Small n="table" w={37} pl={6} /></SmallRow>
            </SmallGrid>
          </PanelBody>
          <PanelTitle>Annotation <Caret /></PanelTitle>
        </Panel>
        <Panel $w={256}>
          <PanelBody>
            <Tool w={58} n="layerLg" label={<>Layer<br />Properties</>} />
            <RightStack>
              <LayerCombo>
                {ic.bulb}{ic.sun}{ic.lock}{ic.swatch}
                <ComboLabel>0</ComboLabel>
                <Caret $s={4} />
              </LayerCombo>
              <LayerRow>{ic.lyr1}{ic.lyr2}{ic.lyr3}{ic.lyr4}{ic.lyr5}</LayerRow>
              <LayerRow>{ic.lyr6}{ic.lyr7}{ic.lyr8}{ic.lyr9}{ic.lyr10}</LayerRow>
            </RightStack>
          </PanelBody>
          <PanelTitle>Layers <Caret /></PanelTitle>
        </Panel>
        <Panel $w={71}>
          <PanelBody>
            <Tool w={36} n="insert" label="Insert" />
            <SmallGrid>
              <SmallRow><Small n="bk1" w={35} pl={4} /></SmallRow>
              <SmallRow><Small n="bk2" w={35} pl={4} /></SmallRow>
              <SmallRow><Small n="bk3" c w={35} pl={4} g={5} /></SmallRow>
            </SmallGrid>
          </PanelBody>
          <PanelTitle>Block <Caret /></PanelTitle>
        </Panel>
        <Panel $w={208}>
          <PanelBody>
            <Tool w={60} n="match" label={<>Match<br />Properties</>} />
            <PropIcons>{ic.wheel}{ic.weight}{ic.ltype}</PropIcons>
            <PropCombos>
              <PropCombo $pl={10}><ComboSwatch />ByLayer<Grow /><Caret $s={4} /></PropCombo>
              <PropCombo $pl={8}><ComboLine />ByLayer<Grow /><Caret $s={4} /></PropCombo>
              <PropCombo $pl={8}><ComboLine />ByLayer<Grow /><Caret $s={4} /></PropCombo>
            </PropCombos>
          </PanelBody>
          <PanelTitle>Properties <Caret /><Launcher><I s={7}><path d="M1 1l5 5M6 2v4H2" stroke="#bbb" /></I></Launcher></PanelTitle>
        </Panel>
        <Panel $w={62}>
          <PanelBody>
            <Tool w={38} n="group" label="Group" />
            <SmallGrid>
              <SmallRow><Small n="g1" w={24} pl={4} /></SmallRow>
              <SmallRow><Small n="g2" w={24} pl={4} /></SmallRow>
              <SmallRow><Highlight>{ic.g3}</Highlight></SmallRow>
            </SmallGrid>
          </PanelBody>
          <PanelTitle>Groups <Caret /></PanelTitle>
        </Panel>
        <Collapsed $w={55} $ml={1}>{ic.calc}<CollapsedLabel>Utilities</CollapsedLabel><CollapsedFoot><Caret /></CollapsedFoot></Collapsed>
        <Collapsed $w={55}>{ic.clip}<CollapsedLabel>Clipboard</CollapsedLabel><CollapsedFoot><Caret /></CollapsedFoot></Collapsed>
        <Collapsed $w={55}>{ic.folder}<CollapsedLabel>View</CollapsedLabel><CollapsedFoot><Caret /></CollapsedFoot></Collapsed>
      </Ribbon>

      <DocRow>
        <DocTab $w={123} $pl={15} $c="#8d8d8d" $bg="linear-gradient(#505050,#434343)">Start</DocTab>
        <DocTab $w={120} $pl={8} $c="#c4c4c4" $bg="linear-gradient(#707070,#4f4f4f)">Drawing1*<DocClose>×</DocClose></DocTab>
        <DocPlus>+</DocPlus>
      </DocRow>
      <Rule />

      <Canvas>
        <Edge />
        <ViewLabel $x={3} $y={7}>[−][Top][2D Wireframe]</ViewLabel>
        <Abs $x={1216} $y={7}>
          <I s={52} h={16}><rect x="2" y="6" width="10" height="5" stroke="#777" fill="#ddd" /><rect x="21" y="2" width="10" height="11" stroke="#666" /><rect x="24" y="4.5" width="5" height="5" stroke="#777" /><path d="M41 3l9 9M50 3l-9 9" stroke="#777" strokeWidth="2" /></I>
        </Abs>

        <CubeLetter $x={1219} $y={34} $b>N</CubeLetter>
        <CubeLetter $x={1182} $y={71} $b>W</CubeLetter>
        <CubeLetter $x={1257} $y={71}>E</CubeLetter>
        <CubeLetter $x={1219} $y={109} $b>S</CubeLetter>
        <CubeFace $x={1202} $y={61}><CubeInner>TOP</CubeInner></CubeFace>
        <WcsPill $x={1187} $y={138}>Unnamed<Caret $s={4} $c="#cfd3e6" /></WcsPill>
        <NavBar $x={1241} $y={177}>
          <I s={30} h={199}>
            <circle cx="15" cy="30" r="11" stroke="#ddd" strokeWidth="1.5" />
            <circle cx="15" cy="30" r="6" stroke="#ddd" strokeWidth="1.5" />
            <path d="M1 54h28M1 155h28" stroke="#e0e0e0" />
            <path d="M7 70v-8M11 68V58M15 68V56M19 68V58M23 72V62M7 70c0 10 4 12 8 12s8-4 8-10" stroke="#dcdcdc" strokeWidth="1.5" />
            <circle cx="18" cy="98" r="4.5" stroke="#ddd" strokeWidth="1.5" />
            <path d="M21 102l5 6M5 92h8" stroke="#ddd" strokeWidth="1.5" />
            <path d="M12 120h6v7h7v6h-7v7h-6v-7H5v-6h7z" stroke="#ddd" strokeWidth="1.5" />
            <rect x="5" y="162" width="20" height="7" stroke="#e0e0e0" />
            <rect x="7" y="172" width="16" height="12" stroke="#e0e0e0" />
            <path d="M13 175l5 3-5 3z" fill="#ddd" />
          </I>
        </NavBar>

        <Card>
          <CardLine>Change screen color in</CardLine>
          <CardLine>autocad from black to any color</CardLine>
        </Card>

        <Abs $x={750} $y={330}>
          <I s={84} h={72}>
            <path d="M8 37.5h65M40.5 5v65" stroke="#222" />
            <rect x="36.5" y="33.5" width="8" height="8" fill="#fff" stroke="#222" />
            <path d="M41 39v14l3-3 3 6 3-1-3-6h4z" fill="#fff" stroke="#444" />
          </I>
        </Abs>

        <Abs $x={0} $y={385}>
          <I s={90}>
            <path d="M17 22v47h48" stroke="#555" strokeWidth="1.5" />
            <circle cx="17" cy="22" r="5" fill="#00009c" />
            <circle cx="65" cy="69" r="5" fill="#00009c" />
            <rect x="11" y="64" width="11" height="11" fill="#0000c0" />
            <text x="19" y="18" fontSize="17" fontFamily="Liberation Sans" fill="#555">Y</text>
            <text x="67" y="70" fontSize="20" fontFamily="Liberation Sans" fill="#555">X</text>
          </I>
        </Abs>

        <CmdLine $x={257} $y={451}>
          <CmdHandle>
            <Grip />
            <I s={12}><path d="M2 2l8 8M10 2l-8 8" stroke="#fff" strokeWidth="1.8" /></I>
            <I s={14}><path d="M2 3a3 3 0 0 0 4 4l6 6 1-1-6-6a3 3 0 0 0-4-4l2 2-1 1z" fill="#eee" /></I>
          </CmdHandle>
          <CmdPrompt>
            <I s={14}><rect x="1" y="1" width="12" height="12" fill="#ddd" stroke="#bbb" /><path d="M3 4l3 3-3 3M7 11h4" stroke="#666" /></I>
            <Caret $s={2} $c="#888" />
          </CmdPrompt>
          <CmdText>Type a command</CmdText>
          <CmdArrow><CaretUp /></CmdArrow>
        </CmdLine>
      </Canvas>

      <LayoutRow>
        <LayoutTab $w={56} $mr={1} $active>Model</LayoutTab>
        <LayoutTab $w={59} $mr={1}>Layout1</LayoutTab>
        <LayoutTab $w={61} $mr={3}>Layout2</LayoutTab>
        <LayoutPlus $w={22}>+</LayoutPlus>
      </LayoutRow>

      <StatusRow>
        {statusGroups.map((g, i) => (
          <StatusGroup key={i} $dark={g.dark}>
            {g.cells.map((c, j) => (
              <StatusCell key={j} $w={c.w} $fs={c.fs} $ls={c.ls} $pl={c.pl}>
                {c.text || (c.caret ? <Caret $s={3.5} /> : ic[c.icon])}
              </StatusCell>
            ))}
          </StatusGroup>
        ))}
      </StatusRow>
      <BottomBlack />
    </Page>
  );
}
